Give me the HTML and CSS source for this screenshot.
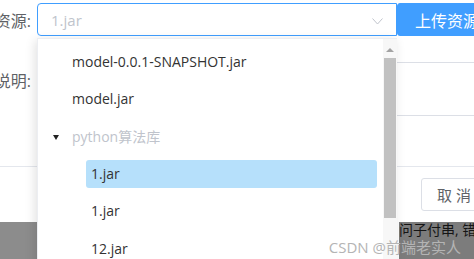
FILE: index.html
```html
<!DOCTYPE html>
<html lang="zh">
<head>
<meta charset="utf-8">
<title>上传资源</title>
<link rel="stylesheet" href="styles.css">
</head>
<body>
<div class="page">
  <div class="dialog">
    <div class="form-row first">
      <div class="label">资源:</div>
      <div class="select">
        <span class="placeholder">1.jar</span>
        <svg class="chevron" width="11" height="7" viewBox="0 0 11 7"><polyline points="0.5,0.5 5.5,6 10.5,0.5" fill="none" stroke="#c0c4cc" stroke-width="1"/></svg>
      </div>
      <button class="btn-primary">上传资源</button>
    </div>
    <div class="form-row second">
      <div class="label">说明:</div>
      <div class="textarea"></div>
    </div>
    <div class="footer">
      <button class="btn-default">取 消</button>
      <button class="btn-primary ok">确 定</button>
    </div>
  </div>
  <div class="backdrop">
    <div class="mask-left"></div>
    <div class="mask-gap"></div>
    <div class="mask-right">问子付串, 错误</div>
  </div>

  <div class="dropdown">
    <div class="tree">
      <div class="node"><span class="caret-space"></span><span class="text">model-0.0.1-SNAPSHOT.jar</span></div>
      <div class="node"><span class="caret-space"></span><span class="text">model.jar</span></div>
      <div class="node disabled"><span class="caret-space"><span class="caret"></span></span><span class="text">python算法库</span></div>
      <div class="node child"><span class="child-label active">1.jar</span></div>
      <div class="node child"><span class="child-label">1.jar</span></div>
      <div class="node child"><span class="child-label">12.jar</span></div>
    </div>
    <div class="scrollbar">
      <div class="arrow-up"><span class="tri"></span></div>
      <div class="thumb"></div>
      <div class="track-rest"></div>
    </div>
  </div>

  <div class="watermark">CSDN @前端老实人</div>
</div>
</body>
</html>
```

FILE: styles.css
```css
* { box-sizing: border-box; }
html, body { margin: 0; padding: 0; }
body {
  width: 474px;
  height: 259px;
  overflow: hidden;
  background: #fff;
  font-family: "Open Sans", "Noto Sans CJK SC", sans-serif;
  color: #606266;
}
.page {
  position: relative;
  width: 474px;
  height: 259px;
  overflow: hidden;
}
.dialog {
  height: 222px;
  background: #fff;
  display: flex;
  flex-direction: column;
}
.form-row {
  display: flex;
}
.form-row.first {
  padding-top: 3px;
  height: 36px;
  align-items: stretch;
}
.form-row.second {
  margin-top: 26px;
  height: 54px;
}
.label {
  flex: 0 0 43px;
  margin-left: -6px;
  display: flex;
  justify-content: flex-end;
  align-items: center;
  padding-right: 6px;
  font-size: 16px;
  white-space: nowrap;
  color: #606266;
  height: 33px;
}
.form-row.second .label {
  height: 36px;
}
.select {
  flex: 0 0 360px;
  height: 33px;
  border: 1px solid #409eff;
  border-radius: 4px 0 0 4px;
  display: flex;
  align-items: center;
  padding-left: 13px;
  padding-right: 13px;
}
.placeholder {
  flex: 1;
  font-size: 15px;
  color: #c0c4cc;
}
.chevron { display: block; margin-top: 3px; }
.btn-primary {
  flex: 0 0 auto;
  height: 33px;
  background: #409eff;
  border: 1px solid #409eff;
  color: #fff;
  border-radius: 3px;
  font-family: "Open Sans", "Noto Sans CJK SC", sans-serif;
  font-size: 16px;
  padding: 0 17px;
  margin: 0;
  white-space: nowrap;
}
.textarea {
  flex: 1;
  border: 1px solid #dcdfe6;
  border-right: none;
  border-radius: 4px 0 0 4px;
}
.footer {
  margin-top: 50px;
  border-top: 1px solid #e4e7ed;
  padding-top: 11px;
  padding-left: 421px;
  display: flex;
  gap: 12px;
}
.btn-default {
  flex: 0 0 auto;
  height: 33px;
  background: #fff;
  border: 1px solid #dcdfe6;
  border-radius: 3px;
  color: #606266;
  font-family: "Open Sans", "Noto Sans CJK SC", sans-serif;
  font-size: 15px;
  padding: 0 15px;
  margin: 0;
  white-space: nowrap;
}
.ok { height: 33px; }

.backdrop {
  height: 37px;
  display: flex;
}
.mask-left {
  flex: 0 0 37px;
  background: #8c8c8c;
}
.mask-gap {
  flex: 0 0 362px;
  background: #fff;
}
.mask-right {
  flex: 1;
  background: #7c7c7c;
  color: #151515;
  font-size: 14px;
  line-height: 16px;
  white-space: nowrap;
  overflow: hidden;
}

.dropdown {
  position: absolute;
  left: 37px;
  top: 38px;
  width: 360px;
  height: 240px;
  background: #fff;
  border: 1px solid #eceef2;
  border-right: none;
  box-shadow: -2px 2px 10px rgba(0, 0, 0, 0.12);
  display: flex;
}
.tree {
  flex: 1;
  padding-top: 4px;
}
.node {
  height: 37.3px;
  display: flex;
  align-items: center;
  padding-left: 14px;
  font-size: 14px;
  color: #333;
  white-space: nowrap;
}
.caret-space {
  flex: 0 0 20px;
  display: flex;
  align-items: center;
}
.caret {
  width: 0;
  height: 0;
  border-left: 3.5px solid transparent;
  border-right: 3.5px solid transparent;
  border-top: 5px solid #222;
  margin-left: 1px;
  margin-top: 2px;
}
.node.disabled .text { color: #c0c4cc; }
.node.child {
  padding-left: 48px;
  padding-right: 6px;
}
.child-label {
  flex: 1;
  height: 28px;
  display: flex;
  align-items: center;
  padding-left: 5px;
  border-radius: 3px;
}
.child-label.active { background: #b6e0fb; }

.scrollbar {
  flex: 0 0 14px;
  display: flex;
  flex-direction: column;
  background: #f7f7f7;
  padding-top: 2px;
}
.arrow-up {
  height: 17px;
  display: flex;
  justify-content: center;
  align-items: center;
}
.tri {
  width: 0;
  height: 0;
  border-left: 4px solid transparent;
  border-right: 4px solid transparent;
  border-bottom: 4px solid #a3a3a3;
}
.thumb {
  height: 160px;
  background: #c1c1c1;
  margin: 0 1px;
}
.track-rest { flex: 1; }

.watermark {
  position: absolute;
  right: 13px;
  bottom: 2px;
  font-size: 15px;
  color: #b4b4b4;
  white-space: nowrap;
  font-family: "Open Sans", "Noto Sans CJK SC", sans-serif;
}
```
